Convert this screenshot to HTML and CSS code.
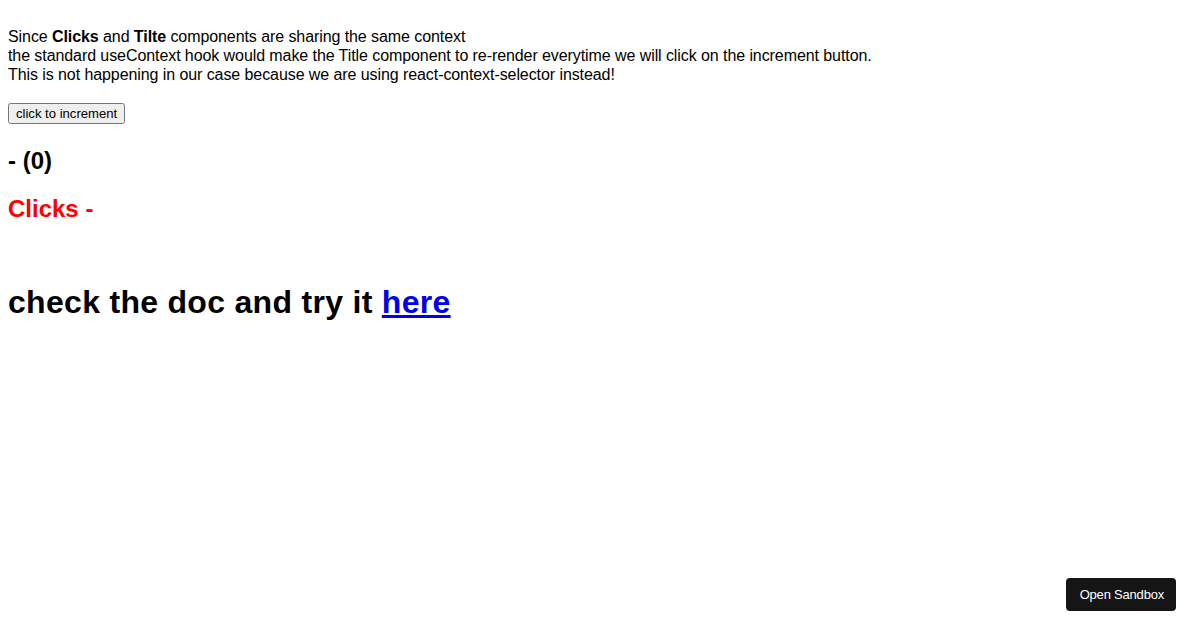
FILE: index.html
```html
<!DOCTYPE html>
<html lang="en">
<head>
    <meta charset="UTF-8">
    <meta name="viewport" content="width=device-width, initial-scale=1.0">
    <title>react-context-selector demo</title>
    <link rel="stylesheet" href="styles.css">
</head>
<body>
    <div class="app">
        <p class="intro">
            Since <b>Clicks</b> and <b>Tilte</b> components are sharing the same context<br>
            the standard useContext hook would make the Title component to re-render everytime we will click on the increment button.<br>
            This is not happening in our case because we are using react-context-selector instead!
        </p>
        <button class="increment">click to increment</button>
        <h2 class="title">- (0)</h2>
        <h2 class="clicks">Clicks -</h2>
        <h1 class="doc">check the doc and try it <a href="#">here</a></h1>
    </div>

    <a class="sandbox-btn" href="#">Open Sandbox</a>
</body>
</html>
```

FILE: styles.css
```css
body {
    margin: 8px;
    font-family: 'Liberation Sans', Arial, sans-serif;
    color: #000;
    background: #fff;
}

.intro {
    margin: 19px 0 19px;
    font-size: 16px;
    line-height: 19px;
    letter-spacing: -0.08px;
}

.increment {
    font-family: 'Liberation Sans', Arial, sans-serif;
    font-size: 13.1px;
    padding: 1px 6px;
}

.title {
    font-size: 24px;
    margin: 23px 0 20px;
}

.clicks {
    color: red;
    font-size: 24px;
    margin: 20px 0 20px;
}

.doc {
    font-size: 32px;
    letter-spacing: 0.3px;
    margin: 61px 0 0;
}

.doc a {
    color: #0000ee;
}

.sandbox-btn {
    position: fixed;
    right: 24px;
    bottom: 19px;
    background: #151515;
    color: #fff;
    font-size: 13px;
    letter-spacing: -0.2px;
    text-decoration: none;
    padding: 9px 12px 9px 14px;
    border-radius: 4px;
}
```
